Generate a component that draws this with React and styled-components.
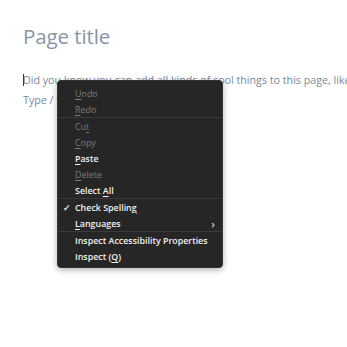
import styled, { createGlobalStyle } from 'styled-components'

const GlobalStyle = createGlobalStyle`
    html, body {
        margin: 0;
        padding: 0;
        background: #ffffff;
        overflow: hidden;
    }
    body {
        font-family: "Open Sans", "Noto Sans", sans-serif;
    }
`

const menuItems = [
    { label: 'Undo', key: 'U', disabled: true },
    { label: 'Redo', key: 'R', disabled: true, separator: true },
    { label: 'Cut', key: 't', disabled: true },
    { label: 'Copy', key: 'C', disabled: true },
    { label: 'Paste', key: 'P' },
    { label: 'Delete', key: 'D', disabled: true },
    { label: 'Select All', key: 'A', separator: true },
    { label: 'Check Spelling', key: 'g', checked: true },
    { label: 'Languages', key: 'L', submenu: true, separator: true },
    { label: 'Inspect Accessibility Properties' },
    { label: 'Inspect (Q)', key: 'Q' },
]

function Mnemonic({ label, k }) {
    if (!k) return label
    const i = label.indexOf(k)
    if (i < 0) return label
    return (
        <>
            {label.slice(0, i)}
            <u>{label[i]}</u>
            {label.slice(i + 1)}
        </>
    )
}

function App() {
    return (
        <Page>
            <GlobalStyle />
            <Title>Page title</Title>
            <Body>
                <Line><Caret />Did you know you can add all kinds of cool things to this page, like</Line>
                <Line>Type / to see what you can add</Line>
            </Body>
            <Menu>
                {menuItems.map((item) => (
                    <MenuGroup key={item.label} $separator={item.separator}>
                        <MenuItem $disabled={item.disabled}>
                            <Check>{item.checked ? '✓' : ''}</Check>
                            <Label><Mnemonic label={item.label} k={item.key} /></Label>
                            {item.submenu && <Chevron>›</Chevron>}
                        </MenuItem>
                    </MenuGroup>
                ))}
            </Menu>
        </Page>
    )
}

const Page = styled.div`
    position: relative;
    width: 347px;
    height: 347px;
    overflow: hidden;
    padding: 22px 0 0 23px;
    box-sizing: border-box;
`

const Title = styled.h1`
    margin: 0;
    font-size: 20.5px;
    font-weight: 400;
    line-height: 28px;
    color: #8795a6;
    letter-spacing: -0.1px;
`

const Body = styled.div`
    margin-top: 20px;
    font-size: 10.7px;
    line-height: 20px;
    color: #7a899b;
    white-space: nowrap;
`

const Line = styled.div`
    position: relative;
`

const Caret = styled.span`
    display: inline-block;
    width: 1px;
    height: 12px;
    background: #333;
    vertical-align: -2px;
    margin-right: -1px;
`

const Menu = styled.div`
    position: absolute;
    left: 57px;
    top: 80px;
    width: 166px;
    padding: 4px 0 3px;
    background: #262626;
    border: 1px solid #333;
    border-radius: 4px;
    box-sizing: border-box;
    box-shadow: 0 2px 6px rgba(0, 0, 0, 0.3);
    font-family: "Open Sans", "Noto Sans", sans-serif;
    font-size: 8.9px;
    font-weight: 600;
`

const MenuGroup = styled.div`
    border-bottom: ${(p) => (p.$separator ? '1px solid #3b3b3b' : 'none')};
`

const MenuItem = styled.div`
    display: flex;
    align-items: center;
    height: 16px;
    padding: 0 7px 0 5px;
    color: ${(p) => (p.$disabled ? '#7c7c7c' : '#f2f2f2')};
    font-weight: ${(p) => (p.$disabled ? 400 : 600)};

    u {
        text-decoration-thickness: 1px;
        text-underline-offset: 1.5px;
    }
`

const Check = styled.span`
    width: 12px;
    font-size: 9px;
    color: #e8e8e8;
`

const Label = styled.span`
    flex: 1;
    white-space: nowrap;
`

const Chevron = styled.span`
    font-size: 11px;
    color: #cfcfcf;
`

export default App
